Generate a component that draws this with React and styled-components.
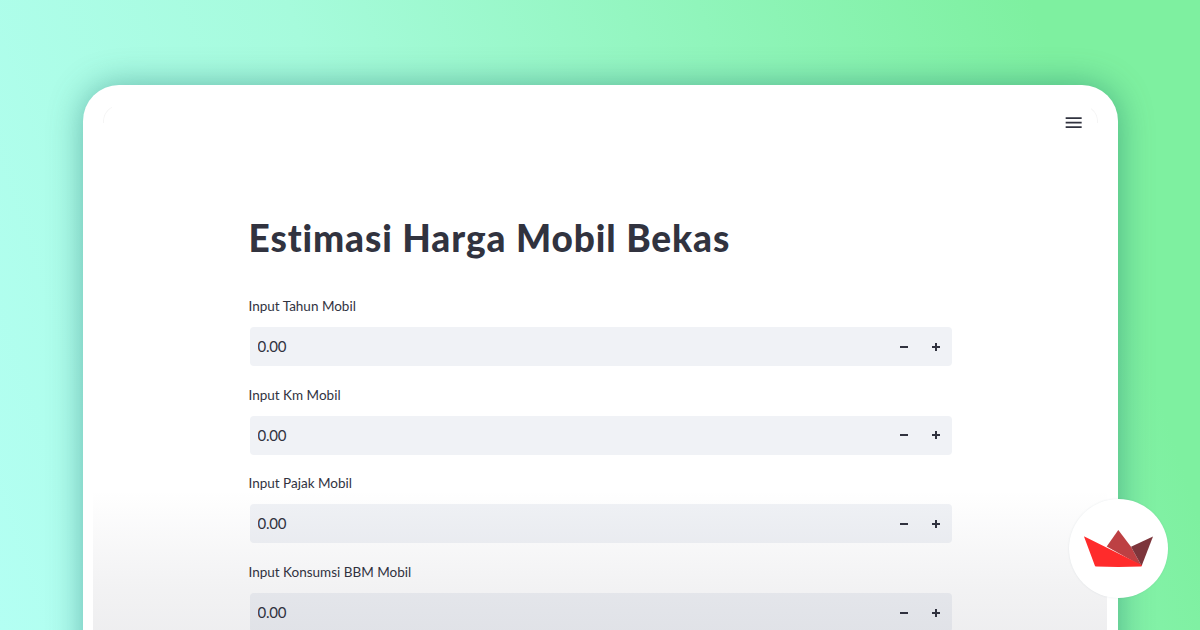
import React from 'react';
import styled, { createGlobalStyle } from 'styled-components';

const GlobalStyle = createGlobalStyle`
  html, body {
    margin: 0;
    padding: 0;
    height: 100%;
  }
  body {
    font-family: "Lato", "Noto Sans", sans-serif;
  }
`;

const Page = styled.div`
  box-sizing: border-box;
  display: flex;
  height: 630px;
  padding: 85px 82px 0 83px;
  overflow: hidden;
  background: linear-gradient(72deg, #b3fff3 0%, #a6fbdc 35%, #7ef0a0 88%, #7ef0a0 100%);
`;

const Card = styled.div`
  position: relative;
  flex: 1;
  height: 640px;
  background: #fff;
  border-radius: 36px 36px 0 0;
  box-shadow: 0 0 34px rgba(0, 90, 90, 0.42);
`;

const CornerHint = styled.div`
  position: absolute;
  top: 20px;
  left: 20px;
  right: 20px;
  height: 18px;
  box-sizing: border-box;
  border: 1px solid #f5f5f5;
  border-bottom: none;
  border-radius: 16px 16px 0 0;
  mask-image: linear-gradient(90deg, #000 9px, transparent 9px, transparent calc(100% - 7px), #000 calc(100% - 7px));
`;

const Content = styled.div`
  display: flex;
  flex-direction: column;
  align-items: center;
`;

const TopBar = styled.header`
  align-self: stretch;
  display: flex;
  justify-content: flex-end;
  padding: 27px 33px 0 0;
  height: 22px;
`;

const MenuButton = styled.button`
  display: flex;
  width: 22px;
  height: 22px;
  padding: 0;
  border: none;
  background: none;
  color: #31333f;
`;

const Column = styled.main`
  width: 704px;
  padding-top: 79px;
`;

const Title = styled.h1`
  margin: 0 0 32px;
  font-size: 37px;
  line-height: 50px;
  font-weight: 900;
  letter-spacing: 0.88px;
  color: #31333f;
`;

const Field = styled.div`
  margin-bottom: 17.7px;
`;

const Label = styled.label`
  display: block;
  height: 22px;
  margin-bottom: 10px;
  font-size: 13.5px;
  line-height: 22px;
  color: #31333f;
`;

const InputRow = styled.div`
  display: flex;
  align-items: center;
  height: 39px;
  margin: 0 1px;
  border-radius: 4px;
  background: #f0f2f6;
`;

const NumberInput = styled.input`
  flex: 1;
  min-width: 0;
  padding: 0 8px 1px;
  border: none;
  outline: none;
  background: none;
  font-family: inherit;
  font-size: 15px;
  letter-spacing: -0.2px;
  color: #31333f;
`;

const StepButton = styled.button`
  display: flex;
  align-items: center;
  justify-content: center;
  width: 32px;
  height: 100%;
  padding: 0;
  border: none;
  background: none;
  color: #31333f;
`;

const Fade = styled.div`
  position: absolute;
  left: 10px;
  right: 11px;
  top: 405px;
  bottom: 0;
  background: linear-gradient(180deg, rgba(30, 30, 50, 0) 0%, rgba(30, 30, 50, 0.055) 40%, rgba(30, 30, 50, 0.115) 100%);
  pointer-events: none;
`;

const Badge = styled.div`
  position: absolute;
  left: 1069px;
  top: 499px;
  display: flex;
  align-items: center;
  justify-content: center;
  width: 99px;
  height: 99px;
  border-radius: 50%;
  background: #fff;
  box-shadow: 0 0 2px rgba(60, 90, 110, 0.12);
`;

const MenuIcon = () => (
  <svg width="21.33" height="21.33" viewBox="0 0 24 24" fill="currentColor">
    <path d="M3 18h18v-2H3v2zm0-5h18v-2H3v2zm0-7v2h18V6H3z" />
  </svg>
);

const MinusIcon = () => (
  <svg width="8" height="8" viewBox="0 0 8 8" fill="currentColor">
    <rect x="0" y="3" width="8" height="2" />
  </svg>
);

const PlusIcon = () => (
  <svg width="8" height="8" viewBox="0 0 8 8" fill="currentColor">
    <path d="M3 0h2v3h3v2H5v3H3V5H0V3h3z" />
  </svg>
);

const BoatLogo = () => (
  <svg width="69" height="37" viewBox="0 0 69 37">
    <path d="M34.3 0 L22.7 16.5 L57.6 36 L47 16.7 Z" fill="#bd4043" />
    <path d="M69 6.4 L47 16.7 L57.6 36 Z" fill="#7d353b" />
    <path d="M0 6.4 Q0 6.3 0.4 6.6 L57.6 35 Q58.2 36.4 57 36.5 Q34 37.4 12 36.5 Q11 36.4 10.8 35.5 Z" fill="#ff2b2b" />
  </svg>
);

const fields = [
  'Input Tahun Mobil',
  'Input Km Mobil',
  'Input Pajak Mobil',
  'Input Konsumsi BBM Mobil',
];

const App = () => (
  <Page>
    <GlobalStyle />
    <Card>
      <CornerHint />
      <Content>
        <TopBar>
          <MenuButton>
            <MenuIcon />
          </MenuButton>
        </TopBar>
        <Column>
          <Title>Estimasi Harga Mobil Bekas</Title>
          {fields.map((label) => (
            <Field key={label}>
              <Label>{label}</Label>
              <InputRow>
                <NumberInput type="text" value="0.00" readOnly />
                <StepButton>
                  <MinusIcon />
                </StepButton>
                <StepButton>
                  <PlusIcon />
                </StepButton>
              </InputRow>
            </Field>
          ))}
        </Column>
      </Content>
      <Fade />
    </Card>
    <Badge>
      <BoatLogo />
    </Badge>
  </Page>
);

export default App;
